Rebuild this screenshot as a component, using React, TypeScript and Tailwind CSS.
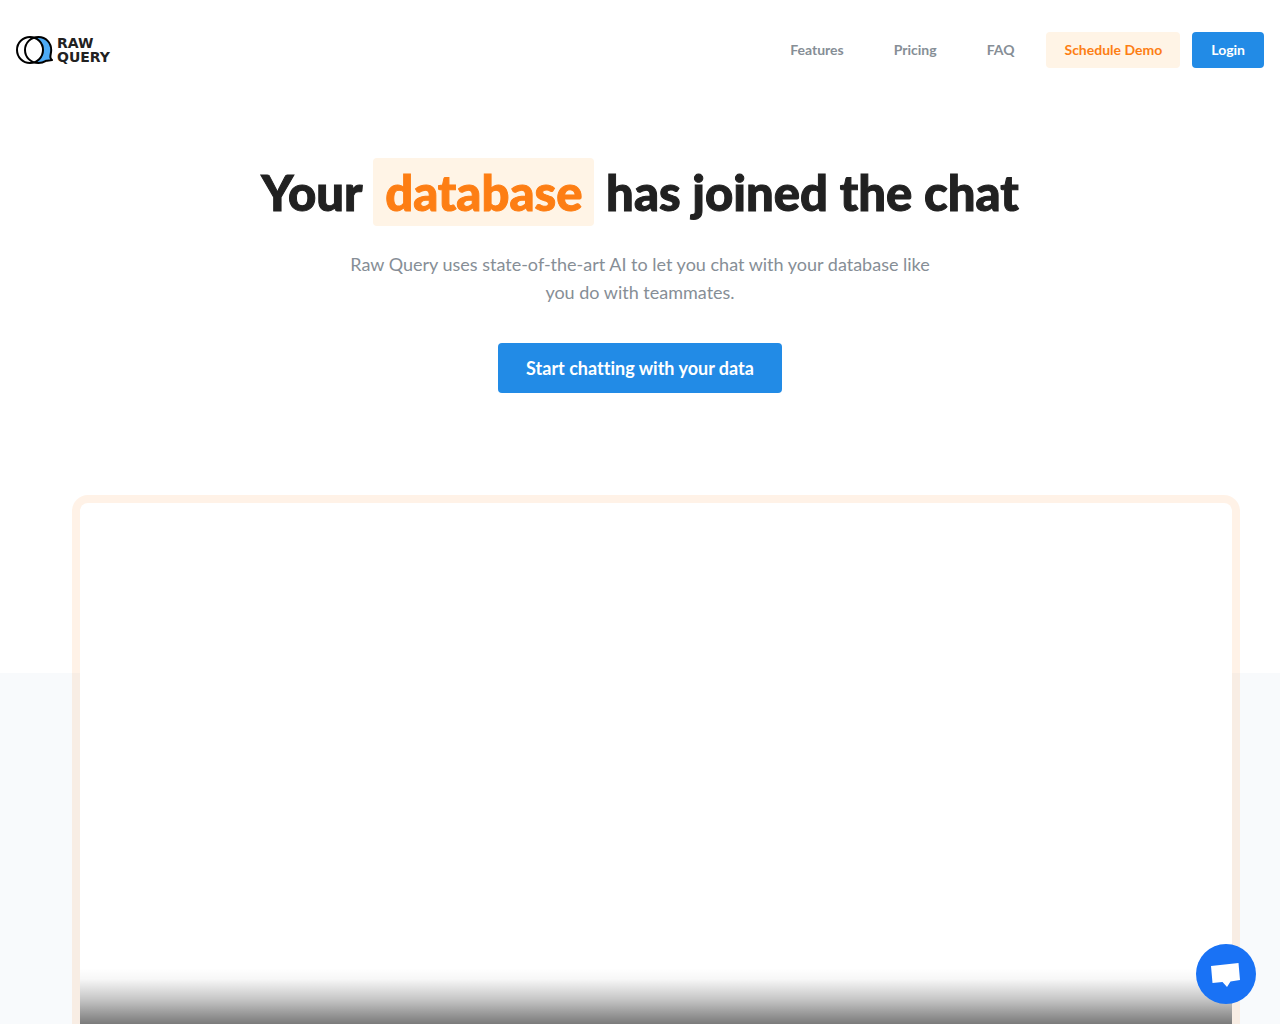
const navLinks = [
  { label: "Features", href: "#features" },
  { label: "Pricing", href: "#pricing" },
  { label: "FAQ", href: "#faq" },
];

function Logo() {
  return (
    <a href="#home" className="flex items-center gap-1">
      <svg width="37" height="30" viewBox="0 0 37 30" fill="none" aria-hidden="true">
        <path
          d="M22.500 2C30 2 35.200 8 35.200 15c0 3-1.200 5.500-.7 7.700.3 1.300 1.500 2.300 1.500 2.300-2.500.5-4.300.3-6 .8-2 1.200-4.500 2.200-7.500 2.200C14.500 28 9 22 9 15S14.500 2 22.500 2Z"
          fill="#4dabf7"
        />
        <circle cx="14" cy="15" r="13" fill="#fff" stroke="#000" strokeWidth="2" />
        <path
          d="M22.500 2C30 2 35.200 8 35.200 15c0 3-1.200 5.500-.7 7.700.3 1.300 1.500 2.300 1.500 2.300-2.500.5-4.300.3-6 .8-2 1.200-4.500 2.200-7.500 2.200C14.500 28 9 22 9 15S14.500 2 22.500 2Z"
          stroke="#000"
          strokeWidth="2"
          strokeLinejoin="round"
        />
      </svg>
      <span className="font-['DejaVu_Sans',sans-serif] text-sm leading-[14px] font-bold text-[#212121]">
        RAW
        <br />
        QUERY
      </span>
    </a>
  );
}

function Header() {
  return (
    <header className="flex h-[100px] shrink-0 items-center justify-between px-4 text-sm font-bold">
      <Logo />
      <div className="flex items-center gap-3">
        <nav className="mr-0.5 flex items-center gap-[14px] text-[#868e96]">
          {navLinks.map((link) => (
            <a key={link.label} href={link.href} className="px-[18px] py-2">
              {link.label}
            </a>
          ))}
        </nav>
        <button type="button" className="h-9 rounded bg-[#fff4e6] px-[18px] text-[#fd7e14]">
          Schedule Demo
        </button>
        <button type="button" className="h-9 rounded bg-[#228be6] px-[19px] text-white">
          Login
        </button>
      </div>
    </header>
  );
}

export default function App() {
  return (
    <div className="flex h-screen flex-col overflow-hidden bg-white font-[Lato,sans-serif] [font-variant-ligatures:none]">
      <Header />
      <main className="flex flex-1 flex-col">
        <section className="flex flex-col items-center px-4 pt-[58px] pb-[102px] text-center">
          <h1 className="text-[49px] leading-[68px] font-black text-[#212121] [-webkit-text-stroke:1px_currentColor]">
            Your{" "}
            <span className="inline-block rounded bg-[#fff4e6] px-3 text-[#fd7e14]">database</span>{" "}
            has joined the chat
          </h1>
          <p className="mt-6 max-w-[600px] text-lg leading-7 text-[#868e96]">
            Raw Query uses state-of-the-art AI to let you chat with your database like you do with
            teammates.
          </p>
          <button
            type="button"
            className="mt-[37px] h-[50px] rounded bg-[#228be6] px-7 text-lg font-bold text-white"
          >
            Start chatting with your data
          </button>
        </section>
        <section className="flex flex-1 bg-[linear-gradient(to_bottom,#fff_178px,#f8fafc_178px)] pr-10 pl-[72px]">
          <div className="flex flex-1 rounded-t-2xl bg-[#fd7e14]/10 px-2 pt-2">
            <div className="flex flex-1 flex-col justify-end overflow-hidden rounded-t-lg bg-white">
              <div className="h-14 bg-[linear-gradient(to_bottom,transparent,#00000008_20%,#00000038_55%,#00000085)]" />
            </div>
          </div>
        </section>
      </main>
      <button
        type="button"
        aria-label="Open chat"
        className="fixed right-6 bottom-5 flex size-[60px] items-center justify-center rounded-full bg-[#1972f5]"
      >
        <svg width="60" height="60" viewBox="0 0 60 60" fill="#fff" aria-hidden="true">
          <path d="M15 22 42.500 19 44 36 34.500 37.500 31 43 26.500 38 16.500 39Z" />
        </svg>
      </button>
    </div>
  );
}
